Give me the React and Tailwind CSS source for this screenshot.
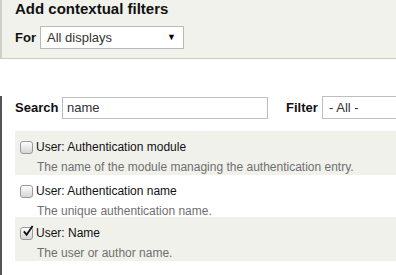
import React from 'react';

const items = [
  { label: 'User: Authentication module', desc: 'The name of the module managing the authentication entry.', checked: false, shaded: true },
  { label: 'User: Authentication name', desc: 'The unique authentication name.', checked: false, shaded: false },
  { label: 'User: Name', desc: 'The user or author name.', checked: true, shaded: true },
];

function Check({ checked }) {
  return (
    <span className="relative inline-block w-[13px] h-[13px] shrink-0 rounded-[3px] border border-[#9a9a9a] bg-gradient-to-b from-[#fdfdfd] to-[#d6d6d6]">
      {checked && (
        <svg className="absolute -top-[3px] left-[1px]" width="12" height="12" viewBox="0 0 13 13">
          <path d="M2 7 L5 10.5 L11.5 1" fill="none" stroke="#111" strokeWidth="2" />
        </svg>
      )}
    </span>
  );
}

export default function App() {
  return (
    <div className="w-[396px] h-[275px] overflow-hidden bg-white text-[#111] font-['Liberation_Sans',Arial,sans-serif]">
      {/* Header */}
      <div className="h-[59px] bg-[#f2f2ed] border-l-2 border-l-[#cfcfca] border-b border-b-[#cbcbc6] pl-[13px]">
        <h1 className="text-[15px] font-bold leading-[18px] pt-[0px]">Add contextual filters</h1>
        <div className="flex items-center mt-[8px]">
          <span className="text-[13px] font-bold w-[25px]">For</span>
          <div className="flex items-center justify-between w-[144px] h-[23px] border border-[#b9b9b9] bg-white pl-[6px] pr-[7px] text-[13px] text-[#333]">
            <span>All displays</span>
            <span className="text-[9px] text-black">▼</span>
          </div>
        </div>
      </div>

      {/* Body */}
      <div className="h-[216px] border-l-2 border-l-[#555] pl-[13px]">
        <div className="flex items-center mt-[37px]">
          <span className="text-[13px] font-bold w-[47px]">Search</span>
          <div className="w-[206px] h-[22px] border border-[#bdbdbd] pl-[4px] text-[13px] text-[#333] leading-[20px]">name</div>
          <span className="text-[13px] font-bold ml-[18px] w-[36px]">Filter</span>
          <div className="flex-1 h-[23px] border border-[#bdbdbd] border-r-0 pl-[6px] text-[13px] text-[#333] leading-[21px]">- All -</div>
        </div>

        <div className="mt-[12px]">
          {items.map((it) => (
            <div key={it.label} className={`pl-[5px] pt-[9px] ${it.shaded ? 'h-[44px] bg-[#f1f1ec]' : 'h-[42px] bg-white'}`}>
              <div className="flex items-center gap-[3px]">
                <Check checked={it.checked} />
                <span className="text-[12px] leading-[14px] text-[#111]">{it.label}</span>
              </div>
              <div className="text-[12px] leading-[14px] text-[#6f6f6f] pl-[17px] mt-[6px]">{it.desc}</div>
            </div>
          ))}
        </div>
      </div>
    </div>
  );
}
